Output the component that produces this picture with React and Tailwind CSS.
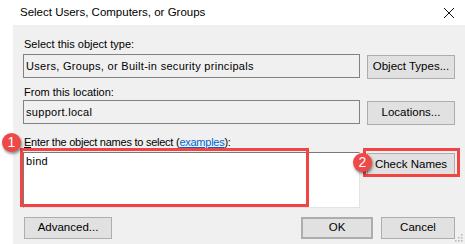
const FONT = { fontFamily: '"Liberation Sans", Arial, sans-serif' };

function WinButton({ children, className = "" }) {
  return (
    <div
      className={`flex items-center justify-center bg-[#e1e1e1] border border-[#adadad] text-[11.5px] text-black ${className}`}
    >
      {children}
    </div>
  );
}

function Badge({ n, className = "" }) {
  return (
    <div
      className={`absolute w-[19px] h-[19px] rounded-full bg-[#ef4848] text-white text-[14px] flex items-center justify-center shadow-[1px_2px_3px_rgba(0,0,0,0.45)] ${className}`}
    >
      {n}
    </div>
  );
}

export default function App() {
  return (
    <div className="relative w-[465px] h-[244px] bg-white overflow-hidden" style={FONT}>
      {/* Title bar */}
      <div className="h-[25px] flex items-center justify-between pl-[20px] pr-[8px] bg-white">
        <span className="text-[11.5px] text-black">Select Users, Computers, or Groups</span>
        <svg width="12" height="12" viewBox="0 0 12 12" className="mr-[2px]">
          <path d="M1 1L11 11M11 1L1 11" stroke="#111" strokeWidth="1" />
        </svg>
      </div>

      <div className="flex h-[219px]">
        <div className="w-[13px] bg-white" />
        <div className="relative flex-1 bg-[#f0f0f0] pl-[10px] pr-[10px] text-[11px] text-black">
          {/* object type */}
          <div className="mt-[12px] h-[15px] leading-[15px] pl-[1px]">Select this object type:</div>
          <div className="mt-[2px] flex gap-[7px]">
            <div className="w-[337px] h-[24px] border border-[#828282] flex items-center px-[2px] tracking-[0.3px]">
              Users, Groups, or Built-in security principals
            </div>
            <WinButton className="w-[88px] h-[24px] mt-[1px]">Object Types...</WinButton>
          </div>

          {/* location */}
          <div className="mt-[6px] h-[15px] leading-[15px] pl-[1px]">From this location:</div>
          <div className="mt-0 flex gap-[7px]">
            <div className="w-[337px] h-[24px] border border-[#828282] flex items-center px-[2px] tracking-[0.3px]">
              support.local
            </div>
            <WinButton className="w-[88px] h-[24px] mt-[1px]">Locations...</WinButton>
          </div>

          {/* names */}
          <div className="mt-[10px] h-[15px] leading-[15px] pl-[1px] tracking-[-0.25px]">
            <span className="underline">E</span>nter the object names to select (
            <span className="text-[#0066cc] underline">examples</span>):
          </div>
          <div className="mt-[2px] flex gap-[7px]">
            <div className="w-[337px] h-[56px] bg-white border border-[#e3e3e3] border-t-[#7a7a7a] border-l-[#7a7a7a] px-[2px] pt-[1px] leading-[15px] tracking-[0.3px]">
              bind
            </div>
            <WinButton className="w-[88px] h-[24px] mt-[1px]">Check Names</WinButton>
          </div>

          {/* bottom buttons */}
          <div className="mt-[9px] flex">
            <WinButton className="w-[88px] h-[22px] ml-[1px]">Advanced...</WinButton>
            <div className="flex-1" />
            <WinButton className="w-[72px] h-[22px] border-2 border-[#0078d7]">OK</WinButton>
            <WinButton className="w-[74px] h-[22px] ml-[8px]">Cancel</WinButton>
          </div>

          {/* resize grip */}
          <svg width="8" height="8" viewBox="0 0 8 8" className="absolute right-[2px] bottom-[2px]">
            <g fill="#b4b4b4">
              <rect x="6" y="0" width="1.5" height="1.5" />
              <rect x="3" y="3" width="1.5" height="1.5" />
              <rect x="6" y="3" width="1.5" height="1.5" />
              <rect x="0" y="6" width="1.5" height="1.5" />
              <rect x="3" y="6" width="1.5" height="1.5" />
              <rect x="6" y="6" width="1.5" height="1.5" />
            </g>
          </svg>
        </div>
      </div>

      {/* annotation highlights */}
      <div className="absolute left-[20px] top-[148px] w-[289px] h-[59px] border-[3px] border-[#f14545]" />
      <div className="absolute left-[363px] top-[148px] w-[97px] h-[29px] border-[3px] border-[#f14545]" />
      <Badge n="1" className="left-[2px] top-[133px]" />
      <Badge n="2" className="left-[353px] top-[153px]" />
    </div>
  );
}
